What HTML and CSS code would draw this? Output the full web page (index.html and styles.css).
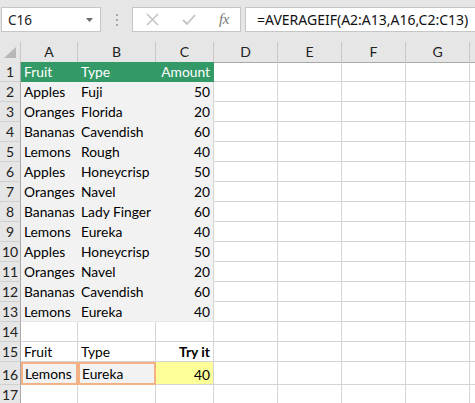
FILE: index.html
```html
<!DOCTYPE html>
<html>
<head>
<meta charset="utf-8">
<link rel="stylesheet" href="styles.css">
</head>
<body>
<div class="app">
  <div class="toolbar">
    <div class="namebox"><span class="ref">C16</span><svg class="caret" width="8" height="5" viewBox="0 0 8 5"><path d="M0 0h7L3.5 4z" fill="#6a6a6a"/></svg></div>
    <div class="dots"><i></i><i></i><i></i></div>
    <div class="fxbox">
      <svg class="ico" width="13" height="13" viewBox="0 0 13 13"><path d="M1 1L12 12M12 1L1 12" stroke="#c3c3c3" stroke-width="1.6" fill="none"/></svg>
      <svg class="ico" width="14" height="13" viewBox="0 0 14 13"><path d="M1 7L5 11L13 2" stroke="#c3c3c3" stroke-width="1.8" fill="none"/></svg>
      <span class="fx">fx</span>
    </div>
    <div class="formula">=AVERAGEIF(A2:A13,A16,C2:C13)</div>
  </div>
  <div class="sheet">
    <div class="row head">
      <div class="corner"><svg width="13" height="12" viewBox="0 0 13 12"><path d="M12 0V11H0z" fill="#b7b7b7"/></svg></div>
      <div class="ch">A</div><div class="ch">B</div><div class="ch">C</div><div class="ch">D</div><div class="ch">E</div><div class="ch">F</div><div class="ch">G</div><div class="ch"></div>
    </div>
    <div class="row">
      <div class="rh">1</div><div class="c green">Fruit</div><div class="c green">Type</div><div class="c green num">Amount</div><div class="c"></div><div class="c"></div><div class="c"></div><div class="c"></div><div class="c"></div>
    </div>
    <div class="row"><div class="rh">2</div><div class="c fill">Apples</div><div class="c fill">Fuji</div><div class="c fill num last">50</div><div class="c"></div><div class="c"></div><div class="c"></div><div class="c"></div><div class="c"></div></div>
    <div class="row"><div class="rh">3</div><div class="c fill">Oranges</div><div class="c fill">Florida</div><div class="c fill num last">20</div><div class="c"></div><div class="c"></div><div class="c"></div><div class="c"></div><div class="c"></div></div>
    <div class="row"><div class="rh">4</div><div class="c fill">Bananas</div><div class="c fill">Cavendish</div><div class="c fill num last">60</div><div class="c"></div><div class="c"></div><div class="c"></div><div class="c"></div><div class="c"></div></div>
    <div class="row"><div class="rh">5</div><div class="c fill">Lemons</div><div class="c fill">Rough</div><div class="c fill num last">40</div><div class="c"></div><div class="c"></div><div class="c"></div><div class="c"></div><div class="c"></div></div>
    <div class="row"><div class="rh">6</div><div class="c fill">Apples</div><div class="c fill">Honeycrisp</div><div class="c fill num last">50</div><div class="c"></div><div class="c"></div><div class="c"></div><div class="c"></div><div class="c"></div></div>
    <div class="row"><div class="rh">7</div><div class="c fill">Oranges</div><div class="c fill">Navel</div><div class="c fill num last">20</div><div class="c"></div><div class="c"></div><div class="c"></div><div class="c"></div><div class="c"></div></div>
    <div class="row"><div class="rh">8</div><div class="c fill">Bananas</div><div class="c fill">Lady Finger</div><div class="c fill num last">60</div><div class="c"></div><div class="c"></div><div class="c"></div><div class="c"></div><div class="c"></div></div>
    <div class="row"><div class="rh">9</div><div class="c fill">Lemons</div><div class="c fill">Eureka</div><div class="c fill num last">40</div><div class="c"></div><div class="c"></div><div class="c"></div><div class="c"></div><div class="c"></div></div>
    <div class="row"><div class="rh">10</div><div class="c fill">Apples</div><div class="c fill">Honeycrisp</div><div class="c fill num last">50</div><div class="c"></div><div class="c"></div><div class="c"></div><div class="c"></div><div class="c"></div></div>
    <div class="row"><div class="rh">11</div><div class="c fill">Oranges</div><div class="c fill">Navel</div><div class="c fill num last">20</div><div class="c"></div><div class="c"></div><div class="c"></div><div class="c"></div><div class="c"></div></div>
    <div class="row"><div class="rh">12</div><div class="c fill">Bananas</div><div class="c fill">Cavendish</div><div class="c fill num last">60</div><div class="c"></div><div class="c"></div><div class="c"></div><div class="c"></div><div class="c"></div></div>
    <div class="row"><div class="rh">13</div><div class="c fill lastrow">Lemons</div><div class="c fill lastrow">Eureka</div><div class="c fill num last lastrow">40</div><div class="c"></div><div class="c"></div><div class="c"></div><div class="c"></div><div class="c"></div></div>
    <div class="row"><div class="rh">14</div><div class="c"></div><div class="c"></div><div class="c"></div><div class="c"></div><div class="c"></div><div class="c"></div><div class="c"></div><div class="c"></div></div>
    <div class="row"><div class="rh">15</div><div class="c">Fruit</div><div class="c">Type</div><div class="c num bold">Try it</div><div class="c"></div><div class="c"></div><div class="c"></div><div class="c"></div><div class="c"></div></div>
    <div class="row tall"><div class="rh">16</div><div class="c input">Lemons</div><div class="c input">Eureka</div><div class="c num yellow">40</div><div class="c"></div><div class="c"></div><div class="c"></div><div class="c"></div><div class="c"></div></div>
    <div class="row"><div class="rh">17</div><div class="c"></div><div class="c"></div><div class="c"></div><div class="c"></div><div class="c"></div><div class="c"></div><div class="c"></div><div class="c"></div></div>
  </div>
</div>
</body>
</html>
```
FILE: styles.css
```css
html, body {
  margin: 0;
  padding: 0;
  background: #ffffff;
  overflow: hidden;
}
.app {
  width: 475px;
  height: 403px;
  overflow: hidden;
  font-family: Lato, "Liberation Sans", sans-serif;
}
.toolbar {
  height: 42px;
  background: #e6e6e6;
  display: flex;
  align-items: flex-start;
  padding-top: 7px;
  box-sizing: border-box;
  padding-left: 1px;
}
.namebox {
  width: 100px;
  height: 25px;
  box-sizing: border-box;
  background: #fff;
  border: 1px solid #c6c6c6;
  display: flex;
  align-items: center;
  justify-content: space-between;
  padding: 0 6px 0 6px;
  font-family: "Noto Sans", "DejaVu Sans", sans-serif;
  font-size: 13.5px;
  color: #222;
}
.caret { margin-top: 1px; }
.dots {
  width: 31px;
  height: 25px;
  display: flex;
  flex-direction: column;
  align-items: center;
  justify-content: center;
  gap: 3px;
}
.dots i {
  display: block;
  width: 2px;
  height: 2px;
  background: #a8a8a8;
}
.fxbox {
  width: 109px;
  height: 25px;
  box-sizing: border-box;
  background: #fff;
  border: 1px solid #c6c6c6;
  display: flex;
  align-items: center;
  padding-left: 13px;
  gap: 23px;
}
.fx {
  font-family: "Liberation Serif", serif;
  font-style: italic;
  font-size: 15px;
  color: #777;
  margin-left: 0;
  letter-spacing: -0.5px;
}
.formula {
  margin-left: 4px;
  flex: 1;
  height: 25px;
  box-sizing: border-box;
  background: #fff;
  border: 1px solid #c6c6c6;
  border-right: none;
  padding-left: 11px;
  font-family: "Noto Sans", "DejaVu Sans", sans-serif;
  font-size: 14px;
  line-height: 23px;
  color: #111;
  white-space: nowrap;
}
.sheet {
  width: 560px;
}
.row {
  display: grid;
  grid-template-columns: 21px 57px 78px 58px 64px 64px 64px 64px 64px;
  height: 20px;
}
.row.tall { height: 23px; }
.row.head { background: #e6e6e6; }
.corner {
  border-right: 1px solid #c8c8c8;
  border-bottom: 1px solid #a9a9a9;
  display: flex;
  align-items: flex-end;
  justify-content: flex-end;
  padding: 0 3px 3px 0;
}
.ch {
  border-right: 1px solid #c8c8c8;
  border-bottom: 1px solid #a9a9a9;
  text-align: center;
  font-size: 14px;
  line-height: 20px;
  color: #222;
}
.rh {
  background: #e6e6e6;
  border-right: 1px solid #a9a9a9;
  border-bottom: 1px solid #d0d0d0;
  text-align: center;
  font-size: 14px;
  color: #222;
  display: flex;
  align-items: flex-end;
  justify-content: center;
  padding-bottom: 1px;
  box-sizing: border-box;
}
.c {
  box-sizing: border-box;
  border-right: 1px solid #d4d4d4;
  border-bottom: 1px solid #d4d4d4;
  font-size: 13.8px;
  color: #000;
  padding: 0 2px 1px 3px;
  display: flex;
  align-items: flex-end;
  white-space: nowrap;
  overflow: visible;
}
.num { justify-content: flex-end; padding-right: 3px; }
.bold { font-weight: 700; }
.green {
  background: #339966;
  border-color: #339966;
  color: #fff;
}
.fill {
  background: #f2f2f2;
  border-color: #f2f2f2;
}
.fill.last { border-right-color: #d4d4d4; }
.fill.lastrow { border-bottom-color: #e6e6e6; }
.yellow {
  background: #ffff99;
}
.input {
  background: #f2f2f2;
  border: 2px solid #f4b183;
  padding-left: 2px;
  padding-bottom: 1px;
}
```
